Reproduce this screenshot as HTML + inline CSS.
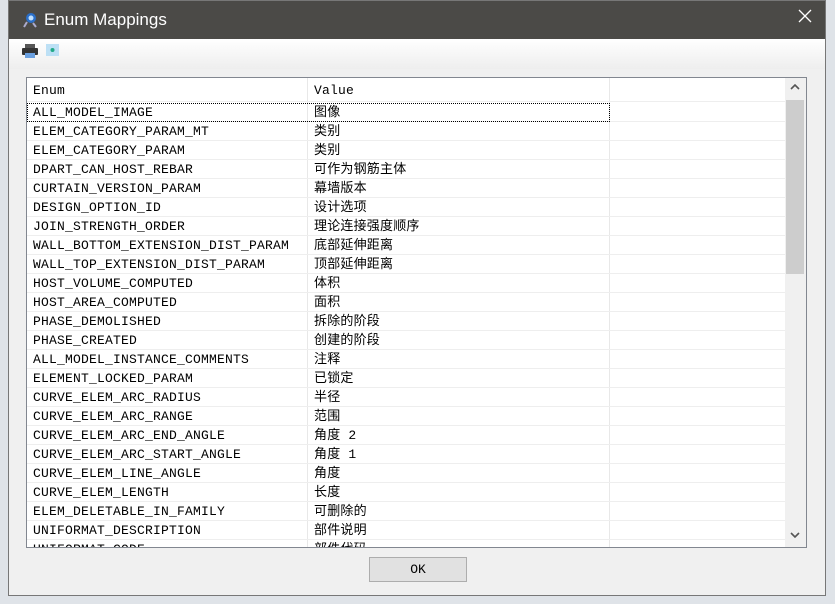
<!DOCTYPE html>
<html><head><meta charset="utf-8"><style>
*{margin:0;padding:0;box-sizing:border-box}
body{width:835px;height:604px;overflow:hidden;background:#dfe3e8;position:relative;font-family:"Liberation Mono","Noto Sans CJK SC",monospace}
.dlg{position:absolute;left:8px;top:0;width:818px;height:596px;background:#f0f0f0;border:1px solid #777}
.title{height:38px;background:#4b4a47;color:#fff;font:17px "Liberation Sans",sans-serif;position:relative}
.title span{position:absolute;left:35px;top:9px}
.close{position:absolute;right:13px;top:8px}
.tb{height:30px;background:linear-gradient(#fff,#eee)}
.box{position:absolute;left:17px;top:76px;width:781px;height:471px;border:1px solid #828790;background:#fff;overflow:hidden}
.row{position:absolute;left:0;height:19px;width:758px;border-bottom:1px solid #eee;font-size:13px;letter-spacing:0.2px;line-height:19px;color:#000}
.row div{position:absolute;top:0;height:19px}
.c1{left:6px}.c2{left:287px;font-family:"Liberation Mono","Noto Sans CJK SC",sans-serif}
.v1{position:absolute;left:280px;top:0;width:1px;height:470px;background:#e8e8e8}
.v2{position:absolute;left:582px;top:0;width:1px;height:470px;background:#e8e8e8}
.sb{position:absolute;left:758px;top:0;width:21px;height:469px;background:#f0f0f0}
.thumb{position:absolute;left:1px;top:22px;width:18px;height:174px;background:#cdcdcd}
.ok{position:absolute;left:360px;top:556px;width:98px;height:25px;background:#e1e1e1;border:1px solid #adadad;text-align:center;font-size:13px;line-height:23px}
</style></head><body>
<div class="dlg">
<div class="title"><svg style="position:absolute;left:14px;top:11px" width="16" height="17" viewBox="0 0 16 17"><circle cx="8" cy="6" r="5" fill="#2a6fc9"/><circle cx="8" cy="6" r="2.5" fill="#bfe0ff"/><path d="M4 10 L1 15 M10 11 L13 15" stroke="#aac" stroke-width="2"/></svg><span>Enum Mappings</span><svg class="close" width="14" height="14"><path d="M1 1 L13 13 M13 1 L1 13" stroke="#fff" stroke-width="1.3"/></svg></div>
<div class="tb"><svg style="position:absolute;left:13px;top:43px" width="16" height="14"><rect x="3" y="0" width="10" height="4" fill="#555"/><rect x="0" y="4" width="16" height="7" rx="1" fill="#333"/><rect x="3" y="9" width="10" height="5" fill="#6aa0e0"/></svg><svg style="position:absolute;left:37px;top:43px" width="13" height="12"><rect width="13" height="12" fill="#bde0f5"/><circle cx="6.5" cy="6" r="2" fill="#2a8"/></svg></div>
<div class="box">
<div class="v1"></div><div class="v2"></div>
<div class="row" style="top:2px;height:22px;line-height:22px"><div class="c1">Enum</div><div class="c2">Value</div></div>
<div class="row" style="top:25px"><div class="c1">ALL_MODEL_IMAGE</div><div class="c2">图像</div><div style="left:0;width:583px;height:19px;border:1px dotted #000"></div></div>
<div class="row" style="top:44px"><div class="c1">ELEM_CATEGORY_PARAM_MT</div><div class="c2">类别</div></div>
<div class="row" style="top:63px"><div class="c1">ELEM_CATEGORY_PARAM</div><div class="c2">类别</div></div>
<div class="row" style="top:82px"><div class="c1">DPART_CAN_HOST_REBAR</div><div class="c2">可作为钢筋主体</div></div>
<div class="row" style="top:101px"><div class="c1">CURTAIN_VERSION_PARAM</div><div class="c2">幕墙版本</div></div>
<div class="row" style="top:120px"><div class="c1">DESIGN_OPTION_ID</div><div class="c2">设计选项</div></div>
<div class="row" style="top:139px"><div class="c1">JOIN_STRENGTH_ORDER</div><div class="c2">理论连接强度顺序</div></div>
<div class="row" style="top:158px"><div class="c1">WALL_BOTTOM_EXTENSION_DIST_PARAM</div><div class="c2">底部延伸距离</div></div>
<div class="row" style="top:177px"><div class="c1">WALL_TOP_EXTENSION_DIST_PARAM</div><div class="c2">顶部延伸距离</div></div>
<div class="row" style="top:196px"><div class="c1">HOST_VOLUME_COMPUTED</div><div class="c2">体积</div></div>
<div class="row" style="top:215px"><div class="c1">HOST_AREA_COMPUTED</div><div class="c2">面积</div></div>
<div class="row" style="top:234px"><div class="c1">PHASE_DEMOLISHED</div><div class="c2">拆除的阶段</div></div>
<div class="row" style="top:253px"><div class="c1">PHASE_CREATED</div><div class="c2">创建的阶段</div></div>
<div class="row" style="top:272px"><div class="c1">ALL_MODEL_INSTANCE_COMMENTS</div><div class="c2">注释</div></div>
<div class="row" style="top:291px"><div class="c1">ELEMENT_LOCKED_PARAM</div><div class="c2">已锁定</div></div>
<div class="row" style="top:310px"><div class="c1">CURVE_ELEM_ARC_RADIUS</div><div class="c2">半径</div></div>
<div class="row" style="top:329px"><div class="c1">CURVE_ELEM_ARC_RANGE</div><div class="c2">范围</div></div>
<div class="row" style="top:348px"><div class="c1">CURVE_ELEM_ARC_END_ANGLE</div><div class="c2">角度 2</div></div>
<div class="row" style="top:367px"><div class="c1">CURVE_ELEM_ARC_START_ANGLE</div><div class="c2">角度 1</div></div>
<div class="row" style="top:386px"><div class="c1">CURVE_ELEM_LINE_ANGLE</div><div class="c2">角度</div></div>
<div class="row" style="top:405px"><div class="c1">CURVE_ELEM_LENGTH</div><div class="c2">长度</div></div>
<div class="row" style="top:424px"><div class="c1">ELEM_DELETABLE_IN_FAMILY</div><div class="c2">可删除的</div></div>
<div class="row" style="top:443px"><div class="c1">UNIFORMAT_DESCRIPTION</div><div class="c2">部件说明</div></div>
<div class="row" style="top:462px"><div class="c1">UNIFORMAT_CODE</div><div class="c2">部件代码</div></div>
<div class="sb"><svg style="position:absolute;left:5px;top:6px" width="10" height="6"><path d="M1 5 L5 1 L9 5" stroke="#555" stroke-width="1.6" fill="none"/></svg><div class="thumb"></div><svg style="position:absolute;left:5px;top:454px" width="10" height="6"><path d="M1 1 L5 5 L9 1" stroke="#555" stroke-width="1.6" fill="none"/></svg></div>
</div>
<div class="ok">OK</div>
</div>
</body></html>
